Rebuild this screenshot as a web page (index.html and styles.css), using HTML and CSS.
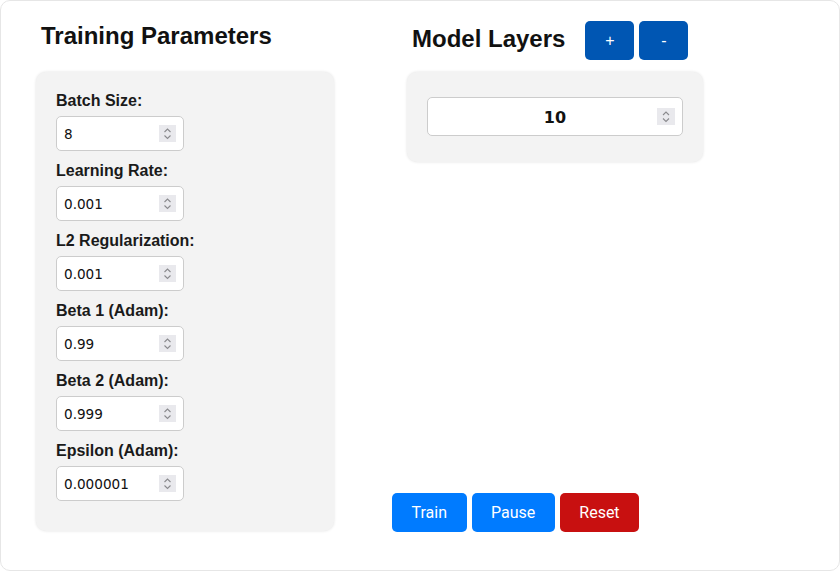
FILE: index.html
```html
<!DOCTYPE html>
<html>
<head>
<meta charset="utf-8">
<link rel="stylesheet" href="styles.css">
</head>
<body>
<div class="app">
  <div class="left">
    <h2 class="title">Training Parameters</h2>
    <div class="panel params">
      <div class="field"><label>Batch Size:</label><div class="num-wrap"><input class="num" type="number" value="8"><span class="spin"><svg width="17" height="17" viewBox="0 0 17 17"><path d="M5.5 7 L8.5 4 L11.5 7 M5.5 10.5 L8.5 13.5 L11.5 10.5" fill="none" stroke="#8a8a8e" stroke-width="1.1"/></svg></span></div></div>
      <div class="field"><label>Learning Rate:</label><div class="num-wrap"><input class="num" type="number" value="0.001"><span class="spin"><svg width="17" height="17" viewBox="0 0 17 17"><path d="M5.5 7 L8.5 4 L11.5 7 M5.5 10.5 L8.5 13.5 L11.5 10.5" fill="none" stroke="#8a8a8e" stroke-width="1.1"/></svg></span></div></div>
      <div class="field"><label>L2 Regularization:</label><div class="num-wrap"><input class="num" type="number" value="0.001"><span class="spin"><svg width="17" height="17" viewBox="0 0 17 17"><path d="M5.5 7 L8.5 4 L11.5 7 M5.5 10.5 L8.5 13.5 L11.5 10.5" fill="none" stroke="#8a8a8e" stroke-width="1.1"/></svg></span></div></div>
      <div class="field"><label>Beta 1 (Adam):</label><div class="num-wrap"><input class="num" type="number" value="0.99"><span class="spin"><svg width="17" height="17" viewBox="0 0 17 17"><path d="M5.5 7 L8.5 4 L11.5 7 M5.5 10.5 L8.5 13.5 L11.5 10.5" fill="none" stroke="#8a8a8e" stroke-width="1.1"/></svg></span></div></div>
      <div class="field"><label>Beta 2 (Adam):</label><div class="num-wrap"><input class="num" type="number" value="0.999"><span class="spin"><svg width="17" height="17" viewBox="0 0 17 17"><path d="M5.5 7 L8.5 4 L11.5 7 M5.5 10.5 L8.5 13.5 L11.5 10.5" fill="none" stroke="#8a8a8e" stroke-width="1.1"/></svg></span></div></div>
      <div class="field"><label>Epsilon (Adam):</label><div class="num-wrap"><input class="num" type="number" value="0.000001"><span class="spin"><svg width="17" height="17" viewBox="0 0 17 17"><path d="M5.5 7 L8.5 4 L11.5 7 M5.5 10.5 L8.5 13.5 L11.5 10.5" fill="none" stroke="#8a8a8e" stroke-width="1.1"/></svg></span></div></div>
    </div>
  </div>
  <div class="right">
    <div class="layers-head">
      <h2 class="title">Model Layers</h2>
      <button class="btn-dark">+</button>
      <button class="btn-dark">-</button>
    </div>
    <div class="panel layers">
      <div class="layer-wrap"><input class="layer-input" type="number" value="10"><span class="spin"><svg width="18" height="17" viewBox="0 0 18 17"><path d="M6 7 L9 4 L12 7 M6 10.5 L9 13.5 L12 10.5" fill="none" stroke="#8a8a8e" stroke-width="1.1"/></svg></span></div>
    </div>
    <div class="controls">
      <button class="btn btn-blue">Train</button>
      <button class="btn btn-blue">Pause</button>
      <button class="btn btn-red">Reset</button>
    </div>
  </div>
</div>
</body>
</html>
```
FILE: styles.css
```css
html, body {
  margin: 0;
  padding: 0;
  background: #ffffff;
}
body {
  font-family: "Liberation Sans", Arial, sans-serif;
  color: #111;
}
.app {
  box-sizing: border-box;
  width: 840px;
  height: 571px;
  border: 1px solid #e6e6e6;
  border-radius: 10px;
  padding: 20px 0 38px 35px;
  display: flex;
  gap: 58px;
}
.left {
  width: 298px;
}
.title {
  margin: 1px 0 22px 5px;
  font-size: 24px;
  line-height: 28px;
  font-weight: bold;
  color: #111;
}
.panel {
  background: #f3f3f3;
  border-radius: 10px;
  box-shadow: 0 0 3px rgba(0, 0, 0, 0.12);
}
.params {
  padding: 20px 20px 19px 20px;
}
.field {
  margin-bottom: 11px;
}
.field label {
  display: block;
  font-size: 16px;
  line-height: 18px;
  font-weight: bold;
  color: #1a1a1a;
  margin-bottom: 6px;
}
.num-wrap {
  position: relative;
  width: 128px;
  height: 35px;
}
.num {
  box-sizing: border-box;
  width: 128px;
  height: 35px;
  border: 1px solid #cccccc;
  border-radius: 5px;
  padding: 0 8px 0 7px;
  font-family: "DejaVu Sans", sans-serif;
  font-size: 13.6px;
  color: #111;
  background: #fff;
  display: block;
}
.num::-webkit-inner-spin-button,
.num::-webkit-outer-spin-button,
.layer-input::-webkit-inner-spin-button,
.layer-input::-webkit-outer-spin-button {
  -webkit-appearance: none;
  margin: 0;
}
.spin {
  position: absolute;
  right: 8px;
  top: 9px;
  width: 17px;
  height: 17px;
  background: #e9e9ed;
  display: block;
}
.spin svg {
  display: block;
}
.right {
  width: 311px;
  display: flex;
  flex-direction: column;
}
.layers-head {
  display: flex;
  align-items: center;
  height: 39px;
  padding-left: 20px;
}
.layers-head .title {
  margin: 0 20px 4px 0;
}
.btn-dark {
  width: 49px;
  height: 39px;
  border: none;
  border-radius: 5px;
  background: #0056b3;
  color: #fff;
  font-family: "Liberation Sans", Arial, sans-serif;
  font-size: 16px;
  margin-right: 5px;
  padding: 0;
}
.layers {
  margin: 12px 0 0 15px;
  width: 296px;
  box-sizing: border-box;
  padding: 25px 20px 26px 20px;
}
.layer-wrap {
  position: relative;
  width: 256px;
  height: 39px;
}
.layer-wrap .spin {
  width: 18px;
  top: 11px;
}
.layer-input {
  box-sizing: border-box;
  width: 256px;
  height: 39px;
  border: 1px solid #cccccc;
  border-radius: 5px;
  text-align: center;
  font-family: "DejaVu Sans", sans-serif;
  font-weight: bold;
  font-size: 16px;
  color: #111;
  background: #fff;
  padding: 1px 8px 0 8px;
  display: block;
}
.controls {
  margin-top: auto;
  display: flex;
  gap: 5px;
}
.btn {
  height: 39px;
  border: none;
  border-radius: 5px;
  padding: 0 19.5px;
  color: #fff;
  font-family: Roboto, sans-serif;
  font-size: 16px;
}
.btn-blue {
  background: #007bff;
}
.btn-red {
  background: #c81010;
}
```
